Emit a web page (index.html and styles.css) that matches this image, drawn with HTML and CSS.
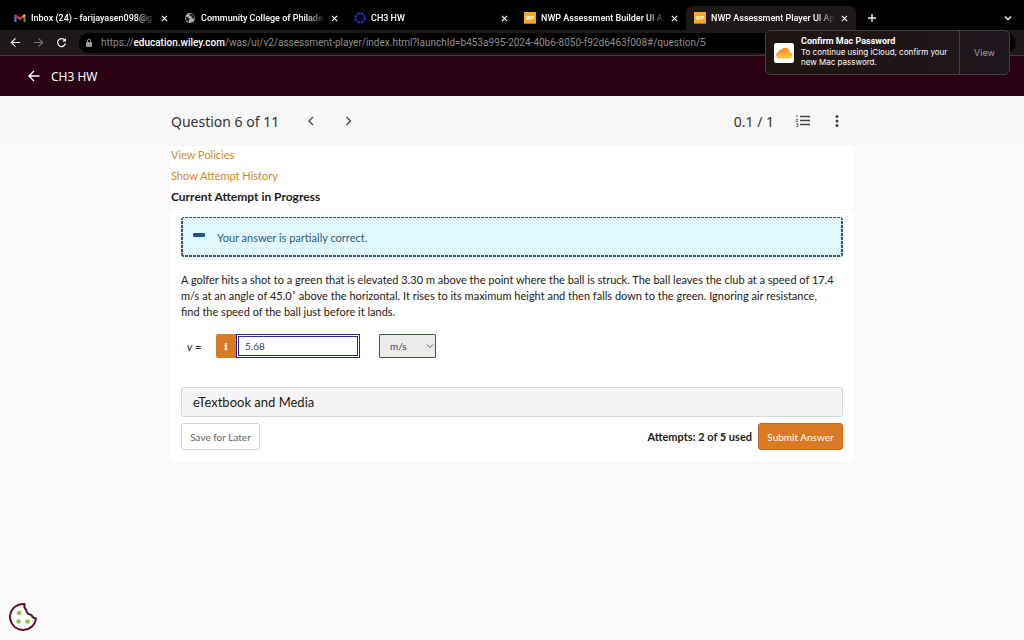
FILE: index.html
```
<!DOCTYPE html>
<html lang="en">
<head>
    <meta charset="UTF-8">
    <meta name="viewport" content="width=device-width, initial-scale=1.0">
    <title>NWP Assessment Player UI App</title>
    <link rel="stylesheet" href="styles.css">
</head>
<body>
    <div class="browser">
        <div class="tabs">
            <div class="tab">
                <svg class="favicon" viewBox="0 0 12 12"><path d="M1.5 10V3" stroke="#4285f4" stroke-width="2"/><path d="M10.5 10V3" stroke="#34a853" stroke-width="2"/><path d="M1 3l5 4 5-4" fill="none" stroke="#ea4335" stroke-width="2"/><path d="M1 3l2 1.600" stroke="#c5221f" stroke-width="2"/><path d="M9 4.600l2-1.600" stroke="#fbbc04" stroke-width="2"/></svg>
                <span class="tab-title">Inbox (24) - farijayasen098@g</span>
                <button class="tab-close" aria-label="Close tab"><svg viewBox="0 0 8 8"><path d="M1 1l6 6M7 1L1 7"/></svg></button>
            </div>
            <div class="tab">
                <svg class="favicon" viewBox="0 0 12 12"><circle cx="6" cy="6" r="5" fill="#aaa"/><path d="M1.500 4.500l3 1 1 1.500-1 3-2.500-2zM6 1.500l-.5 2 2 1 .5 1.500 2.500 1V4L8.500 2z" fill="#222"/></svg>
                <span class="tab-title">Community College of Philadel</span>
                <button class="tab-close" aria-label="Close tab"><svg viewBox="0 0 8 8"><path d="M1 1l6 6M7 1L1 7"/></svg></button>
            </div>
            <div class="tab">
                <svg class="favicon" viewBox="0 0 12 12"><circle cx="6" cy="6" r="4.700" fill="none" stroke="#2030d8" stroke-width="2" stroke-dasharray="2.700 1"/><circle cx="6" cy="6" r="2.600" fill="none" stroke="#2030d8" stroke-width=".8" stroke-dasharray=".8 1.240"/></svg>
                <span class="tab-title">CH3 HW</span>
                <button class="tab-close" aria-label="Close tab"><svg viewBox="0 0 8 8"><path d="M1 1l6 6M7 1L1 7"/></svg></button>
            </div>
            <div class="tab">
                <span class="favicon wp">WP</span>
                <span class="tab-title">NWP Assessment Builder UI Ap</span>
                <button class="tab-close" aria-label="Close tab"><svg viewBox="0 0 8 8"><path d="M1 1l6 6M7 1L1 7"/></svg></button>
            </div>
            <div class="tab active">
                <span class="favicon wp">WP</span>
                <span class="tab-title">NWP Assessment Player UI App</span>
                <button class="tab-close" aria-label="Close tab"><svg viewBox="0 0 8 8"><path d="M1 1l6 6M7 1L1 7"/></svg></button>
            </div>
            <button class="new-tab" aria-label="New tab"><svg viewBox="0 0 10 10"><path d="M5 1v8M1 5h8"/></svg></button>
            <button class="tab-menu" aria-label="Search tabs"><svg viewBox="0 0 10 10"><path d="M2 3.500l3 3 3-3"/></svg></button>
        </div>
        <div class="toolbar">
            <button aria-label="Back"><svg viewBox="0 0 12 12"><path d="M11 6H2M6 1.500L1.500 6 6 10.500"/></svg></button>
            <button class="dim" aria-label="Forward"><svg viewBox="0 0 12 12"><path d="M1 6h9M6 1.500L10.500 6 6 10.500"/></svg></button>
            <button aria-label="Reload"><svg viewBox="0 0 12 12"><path d="M9.500 3.500A4.300 4.300 0 1 0 10.300 7"/><path class="tip" d="M10.800 1v4h-4z"/></svg></button>
            <div class="address">
                <svg viewBox="0 0 8 10"><rect x="1" y="4" width="6" height="5" rx="1" fill="#999"/><path d="M2.500 4V2.700a1.500 1.500 0 0 1 3 0V4" fill="none" stroke="#999"/></svg>
                <span>https://<b>education.wiley.com</b>/was/ui/v2/assessment-player/index.html?launchId=b453a995-2024-40b6-8050-f92d6463f008#/question/5</span>
            </div>
        </div>
    </div>

    <div class="notification">
        <svg class="cloud" viewBox="0 0 20 20"><defs><linearGradient id="sun" x1="0" y1="0" x2="0" y2="1"><stop offset="0" stop-color="#f28a1c"/><stop offset="1" stop-color="#fbc545"/></linearGradient></defs><rect width="20" height="20" rx="2" fill="#fff"/><path d="M5 15.500a3.400 3.400 0 0 1-.6-6.600A2.700 2.700 0 0 1 7.300 6.800a4.500 4.500 0 0 1 8.300 2.400A3.200 3.200 0 0 1 15.400 15.500z" fill="url(#sun)"/></svg>
        <div class="notification-text">
            <strong>Confirm Mac Password</strong>
            <p>To continue using iCloud, confirm your new Mac password.</p>
        </div>
        <button>View</button>
    </div>

    <header class="app-header">
        <a href="#" aria-label="Back to course"><svg viewBox="0 0 12 12"><path d="M11.500 6H1M6 1L1 6l5 5"/></svg></a>
        <span>CH3 HW</span>
    </header>

    <div class="question-bar">
        <div class="wrap">
            <h1>Question 6 of 11</h1>
            <button aria-label="Previous question"><svg viewBox="0 0 12 12"><path d="M8 2L4 6l4 4"/></svg></button>
            <button aria-label="Next question"><svg viewBox="0 0 12 12"><path d="M4.500 2l4 4-4 4"/></svg></button>
            <span class="score">0.1 / 1</span>
            <button aria-label="Question list"><svg class="list" viewBox="0 0 16 14"><path d="M5 2.500h10M5 6.500h10M5 10.500h10"/><path class="nums" d="M1 1.500h1v2M1 5.500h2l-2 2h2M1 9.500h2v3H1M2 11h1"/></svg></button>
            <button aria-label="More options"><svg class="dots" viewBox="0 0 16 14"><circle cx="8" cy="2.500" r="1.500"/><circle cx="8" cy="7" r="1.500"/><circle cx="8" cy="11.500" r="1.500"/></svg></button>
        </div>
    </div>

    <main class="wrap card">
        <div class="links">
            <a href="#">View Policies</a>
            <a href="#">Show Attempt History</a>
            <strong>Current Attempt in Progress</strong>
        </div>
        <div class="question">
            <div class="alert"><span class="minus"></span>Your answer is partially correct.</div>
            <p class="problem">A golfer hits a shot to a green that is elevated 3.30 m above the point where the ball is struck. The ball leaves the club at a speed of 17.4 m/s at an angle of 45.0˚ above the horizontal. It rises to its maximum height and then falls down to the green. Ignoring air resistance, find the speed of the ball just before it lands.</p>
            <div class="answer">
                <label for="speed"><i>v</i> =</label>
                <button class="info" aria-label="Hint">i</button>
                <input type="text" id="speed" value="5.68">
                <div class="units">
                    <select aria-label="Units">
                        <option>m/s</option>
                    </select>
                    <svg viewBox="0 0 8 8"><path d="M1 2.500l3 3 3-3"/></svg>
                </div>
            </div>
            <button class="media">eTextbook and Media</button>
            <div class="actions">
                <button class="save">Save for Later</button>
                <strong>Attempts: 2 of 5 used</strong>
                <button class="submit">Submit Answer</button>
            </div>
        </div>
    </main>

    <button class="cookie" aria-label="Cookie settings">
        <svg viewBox="0 0 30 30"><path d="M16.500 2A13 13 0 1 0 28 16.500c-2.500-.5-4-1.500-4.500-3.500-3-.5-5-2-5.300-5C16.500 6.500 16 4.500 16.500 2z" fill="#fff" stroke="#571428" stroke-width="2" stroke-linejoin="round"/><g fill="#8cc43c"><circle cx="11" cy="11" r="2.200"/><circle cx="10.500" cy="19.500" r="2.200"/><circle cx="19.500" cy="19.500" r="2.200"/></g></svg>
    </button>
</body>
</html>
```
FILE: styles.css
```
* {
    box-sizing: border-box;
}
body {
    margin: 0;
    min-height: 100vh;
    background: #fafafa;
    color: #1e1a14;
    font-family: Lato, sans-serif;
    font-size: 11px;
}
button {
    padding: 0;
    border: none;
    background: none;
    color: inherit;
    font-family: inherit;
    cursor: pointer;
}
svg {
    display: block;
}

/* browser chrome */
.browser {
    background: #000;
    color: #fff;
    font-family: Inter, sans-serif;
    font-size: 9px;
}
.tabs {
    display: flex;
    height: 30px;
    padding: 6px 8px 0 6px;
}
.tab {
    display: flex;
    align-items: center;
    flex: 0 1 170px;
    min-width: 0;
    padding: 0 8px;
    border-radius: 6px 6px 0 0;
}
.tab.active {
    background: #1e1819;
}
.favicon {
    flex: none;
    width: 12px;
    height: 12px;
    margin-right: 5px;
}
.wp {
    background: #f5a623;
    border-bottom: 1px solid #b97308;
    font-size: 5px;
    font-weight: 700;
    line-height: 12px;
    text-align: center;
}
.tab-title {
    flex: 1;
    overflow: hidden;
    white-space: nowrap;
    font-family: Roboto, sans-serif;
    font-weight: 500;
    -webkit-mask-image: linear-gradient(to right, #000 85%, transparent);
    mask-image: linear-gradient(to right, #000 85%, transparent);
}
.tab-close {
    margin-left: 6px;
}
.tab-close svg {
    width: 7px;
    height: 7px;
}
.tabs button svg,
.toolbar button svg {
    fill: none;
    stroke: #fff;
    stroke-width: 1.3;
}
.new-tab svg,
.tab-menu svg {
    width: 10px;
    height: 10px;
}
.new-tab {
    margin-left: 11px;
}
.tab-menu {
    margin-left: auto;
    padding-right: 3px;
}
.toolbar {
    display: flex;
    align-items: center;
    gap: 12px;
    height: 26px;
    padding: 0 8px 0 10px;
    background: #1e1819;
    border-bottom: 1px solid #433c3c;
}
.toolbar button svg {
    width: 11px;
    height: 11px;
}
.toolbar .tip {
    fill: #fff;
    stroke: none;
}
.toolbar .dim {
    opacity: 0.4;
}
.address {
    display: flex;
    align-items: center;
    flex: 1;
    gap: 8px;
    height: 20px;
    min-width: 0;
    padding: 0 6px;
    border-radius: 10px;
    background: #000;
    color: #918e8e;
    font-family: Roboto, sans-serif;
    font-size: 10px;
    white-space: nowrap;
}
.address svg {
    width: 8px;
    height: 10px;
}
.address b {
    color: #fff;
    font-weight: 500;
}

.notification {
    position: absolute;
    top: 30px;
    right: 14px;
    display: flex;
    align-items: center;
    width: 245px;
    height: 45px;
    padding-left: 8px;
    border: 1px solid #4a4042;
    border-radius: 6px;
    background: linear-gradient(to right, #201411, #1e161d);
    color: #fff;
    font-family: Inter, sans-serif;
    font-size: 8px;
    line-height: 10px;
}
.cloud {
    flex: none;
    width: 20px;
    height: 20px;
}
.notification-text {
    flex: 1;
    padding: 0 8px 3px 7px;
}
.notification strong {
    display: block;
    font-family: Roboto, sans-serif;
    font-size: 9px;
    font-weight: 700;
    line-height: 12px;
}
.notification p {
    margin: 0;
}
.notification button {
    align-self: stretch;
    width: 50px;
    border-left: 1px solid #4a4042;
    color: #a39c9e;
    font-size: 9px;
}

/* assessment player */
.app-header {
    display: flex;
    align-items: center;
    gap: 11px;
    height: 40px;
    padding-left: 28px;
    background: #2a0013;
    color: #fff;
    font-family: "Noto Sans", sans-serif;
    font-size: 12px;
}
.app-header svg {
    width: 12px;
    height: 12px;
    fill: none;
    stroke: #fff;
    stroke-width: 1.4;
}
.wrap {
    width: calc(100% - 32px);
    max-width: 682px;
    margin: 0 auto;
}
.question-bar {
    background: #f8f8f8;
    font-family: "Noto Sans", sans-serif;
}
.question-bar .wrap {
    display: flex;
    align-items: center;
    height: 50px;
    padding-right: 8px;
    color: #333;
}
.question-bar h1 {
    margin: 0 26px 0 0;
    font-size: 14px;
    font-weight: 400;
}
.question-bar button + button {
    margin-left: 25px;
}
.question-bar svg {
    width: 12px;
    height: 12px;
    fill: none;
    stroke: #444;
    stroke-width: 1.3;
}
.question-bar .score {
    margin: 0 21px 0 auto;
    font-size: 14px;
}
.question-bar .list,
.question-bar .dots {
    width: 16px;
    height: 14px;
}
.question-bar .nums {
    stroke-width: 0.7;
}
.question-bar .dots {
    fill: #444;
    stroke: none;
}
.question-bar button + button:last-child {
    margin-left: 18px;
}

.card {
    background: #fff;
}
.links {
    display: flex;
    flex-direction: column;
    align-items: flex-start;
    gap: 6px;
    padding: 1px 0 5px;
    border-bottom: 1px solid #f4f4f4;
    line-height: 15px;
}
.links a {
    color: #d08a1d;
    text-decoration: none;
}
.links strong {
    font-size: 12px;
}
.question {
    padding: 7px 10px 12px;
}
.alert {
    --dash: #2b5a70 0 3px, transparent 3px 4px;
    display: flex;
    align-items: center;
    height: 40px;
    padding-left: 12px;
    border-radius: 3px;
    background:
        repeating-linear-gradient(to right, var(--dash)) top / 100% 1px no-repeat,
        repeating-linear-gradient(to right, var(--dash)) bottom / 100% 2px no-repeat,
        repeating-linear-gradient(to bottom, var(--dash)) left / 2px 100% no-repeat,
        repeating-linear-gradient(to bottom, var(--dash)) right / 2px 100% no-repeat,
        #e0f8fe;
    color: #2c5c80;
}
.minus {
    width: 12px;
    height: 4px;
    margin: 0 12px 5px 0;
    border-radius: 1px;
    background: #1f5a80;
}
.problem {
    margin: 15px 0 14px;
    padding-right: 8px;
    line-height: 16px;
}
.answer {
    display: flex;
    align-items: center;
    height: 24px;
    margin-bottom: 29px;
}
.answer label {
    width: 35px;
    padding-left: 6px;
}
.info {
    width: 20px;
    height: 24px;
    border-radius: 2px 0 0 2px;
    background: #d97b25;
    color: #fff;
    font-family: "DejaVu Serif", serif;
    font-size: 10px;
    font-weight: 700;
}
.answer input,
.answer select {
    height: 24px;
    color: #444;
    font-family: inherit;
    font-size: 10px;
}
.answer input {
    width: 124px;
    margin-right: 19px;
    padding: 0 6px;
    border: 3px double #2a2c96;
}
.units {
    position: relative;
}
.answer select {
    display: block;
    width: 57px;
    padding: 0 10px;
    border: 1px solid #34663a;
    border-radius: 1px;
    background: #ebebeb;
    appearance: none;
}
.units svg {
    position: absolute;
    top: 8px;
    right: 2px;
    width: 8px;
    height: 8px;
    fill: none;
    stroke: #555;
    pointer-events: none;
}
.media {
    display: block;
    width: 100%;
    height: 30px;
    margin-bottom: 6px;
    padding: 0 11px;
    border: 1px solid #d9d9d9;
    border-radius: 3px;
    background: #f4f4f4;
    font-size: 13px;
    text-align: left;
}
.actions {
    display: flex;
    align-items: center;
}
.actions strong {
    margin: 0 6px 0 auto;
}
.actions button {
    height: 27px;
    border: 1px solid #d4d4d4;
    border-radius: 3px;
    font-size: 10px;
}
.save {
    width: 79px;
    color: #666;
}
.actions .submit {
    width: 85px;
    border-color: #bd6a20;
    background: #d97b25;
    color: #fff;
}
.cookie {
    position: fixed;
    left: 8px;
    bottom: 8px;
}
.cookie svg {
    width: 30px;
    height: 30px;
}
```
